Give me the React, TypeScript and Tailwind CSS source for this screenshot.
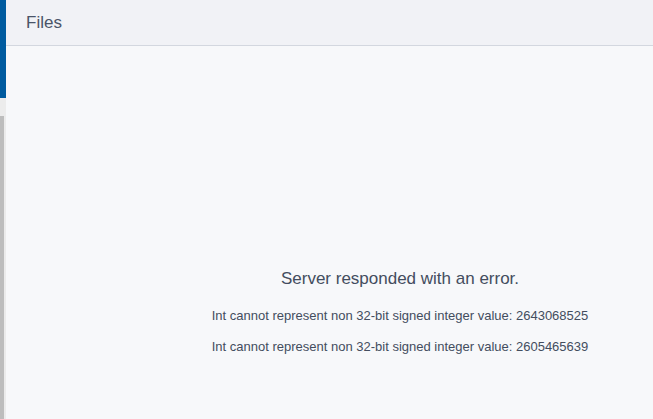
import React from 'react';

const errors = [
  'Int cannot represent non 32-bit signed integer value: 2643068525',
  'Int cannot represent non 32-bit signed integer value: 2605465639',
];

const App: React.FC = () => {
  return (
    <div className="flex h-[419px] w-[653px] overflow-hidden font-['Liberation_Sans',Arial,sans-serif]">
      <aside className="flex w-[6px] flex-col">
        <div className="h-[98px] bg-[#005b9f]" />
        <div className="h-[18px] bg-[#ececec]" />
        <div className="flex flex-1">
          <div className="w-[4px] bg-[#bdbdbd]" />
          <div className="w-[2px] bg-[#ebebeb]" />
        </div>
      </aside>

      <main className="flex flex-1 flex-col bg-[#f7f8fa]">
        <header className="flex h-[46px] items-center border-b border-[#d3d7df] bg-[#f1f2f6] pl-[20px]">
          <h1 className="text-[17px] text-[#4a5468]">Files</h1>
        </header>

        <section className="flex flex-col items-center pl-[141px] text-[#434d5e]">
          <h2 className="mt-[223px] text-[17px] leading-[20px]">Server responded with an error.</h2>
          {errors.map((msg, i) => (
            <p key={i} className={`${i === 0 ? 'mt-[19px]' : 'mt-[15px]'} text-[13px] leading-[16px]`}>
              {msg}
            </p>
          ))}
        </section>
      </main>
    </div>
  );
};

export default App;
